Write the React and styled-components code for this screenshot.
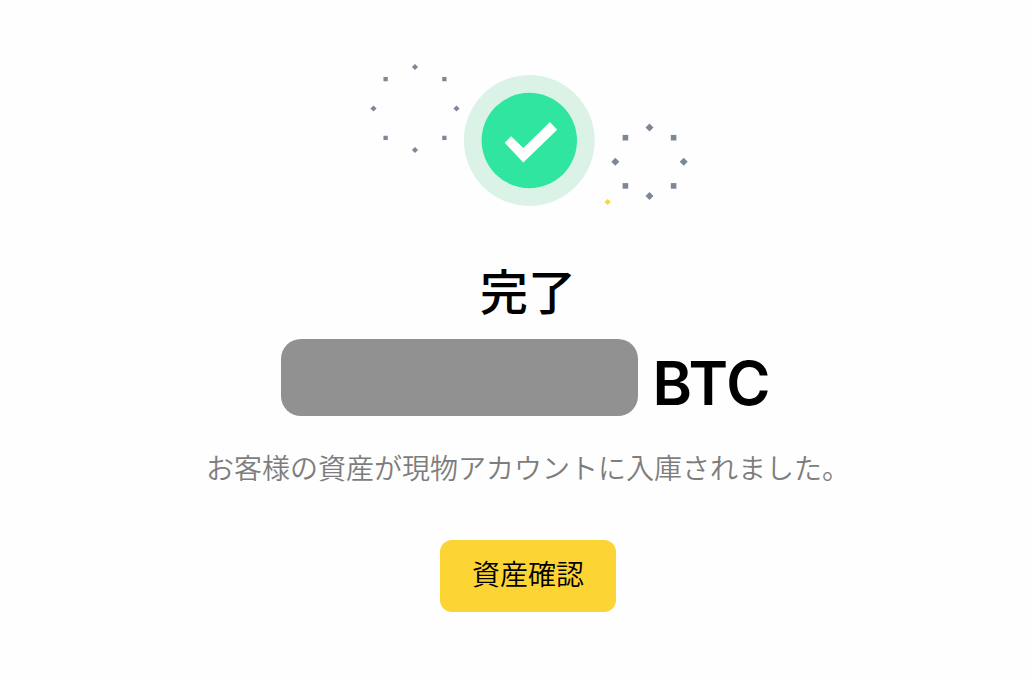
import React from "react";
import styled, { createGlobalStyle } from "styled-components";

const GlobalStyle = createGlobalStyle`
  body {
    margin: 0;
    background: #fefefe;
    color: #000;
    font-family: "Noto Sans CJK JP", sans-serif;
  }
`;

const Page = styled.main`
  box-sizing: border-box;
  display: flex;
  flex-direction: column;
  align-items: center;
  padding: 60px 0 70px 24px;
`;

const Illustration = styled.svg`
  display: block;
  width: 320px;
  height: 150px;
`;

const Title = styled.h1`
  margin: 43px 0 0;
  font-size: 48px;
  font-weight: 500;
  line-height: 72px;
`;

const AmountRow = styled.div`
  display: flex;
  align-items: flex-end;
  gap: 14px;
  margin-top: 14px;
`;

const HiddenAmount = styled.span`
  width: 357px;
  height: 77px;
  border-radius: 20px;
  background: #919191;
`;

const Currency = styled.span`
  padding-right: 4px;
  font-family: Inter, "Liberation Sans", sans-serif;
  font-size: 60px;
  font-weight: 600;
  line-height: 66px;
`;

const Message = styled.p`
  margin: 31px 0 0;
  color: #7d7d7d;
  font-size: 28px;
  font-weight: 350;
  line-height: 40px;
  white-space: nowrap;
`;

const ConfirmButton = styled.button`
  height: 72px;
  margin-top: 53px;
  padding: 0 32px 6px;
  border: 0;
  border-radius: 12px;
  background: #fcd535;
  color: #000;
  font-family: inherit;
  font-size: 28px;
  font-weight: 350;
  line-height: 40px;
  cursor: pointer;
`;

const Diamond = ({ x, y, r, fill }) => (
  <path d={`M${x} ${y - r}l${r} ${r}l${-r} ${r}l${-r} ${-r}z`} fill={fill} />
);

const Square = ({ x, y, size, fill }) => (
  <rect x={x - size / 2} y={y - size / 2} width={size} height={size} fill={fill} />
);

const Burst = ({ cx, cy, radius, corner, r, size }) => (
  <g>
    {[[0, -1], [1, 0], [0, 1], [-1, 0]].map(([dx, dy]) => (
      <Diamond key={`${dx}${dy}`} x={cx + dx * radius} y={cy + dy * radius} r={r} fill="#7d8798" />
    ))}
    {[[-1, -1], [1, -1], [1, 1], [-1, 1]].map(([dx, dy]) => (
      <Square key={`${dx}${dy}`} x={cx + dx * corner} y={cy + dy * corner} size={size} fill="#7d8798" />
    ))}
  </g>
);

const SuccessIllustration = () => (
  <Illustration viewBox="0 0 320 150" aria-hidden="true">
    <Burst cx={47} cy={48.5} radius={41.5} corner={29.4} r={3.1} size={4.3} />
    <Burst cx={281.5} cy={101.8} radius={34.2} corner={24.1} r={4} size={5.6} />
    <Diamond x={239.7} y={142} r={3.1} fill="#fcd535" />
    <Square x={115} y={12.5} size={1} fill="#fbf3cc" />
    <circle cx="161.3" cy="80.5" r="65.4" fill="#daf3e6" />
    <circle cx="161.3" cy="80.5" r="47.7" fill="#2fe5a0" />
    <path d="M136.7 82.8l6.4-6.5 12.2 11.8 26.7-26 7.2 7.6-33.9 32.7z" fill="#fff" />
  </Illustration>
);

export default function App() {
  return (
    <>
      <GlobalStyle />
      <Page>
        <SuccessIllustration />
        <Title>完了</Title>
        <AmountRow>
          <HiddenAmount />
          <Currency>BTC</Currency>
        </AmountRow>
        <Message>お客様の資産が現物アカウントに入庫されました。</Message>
        <ConfirmButton type="button">資産確認</ConfirmButton>
      </Page>
    </>
  );
}
